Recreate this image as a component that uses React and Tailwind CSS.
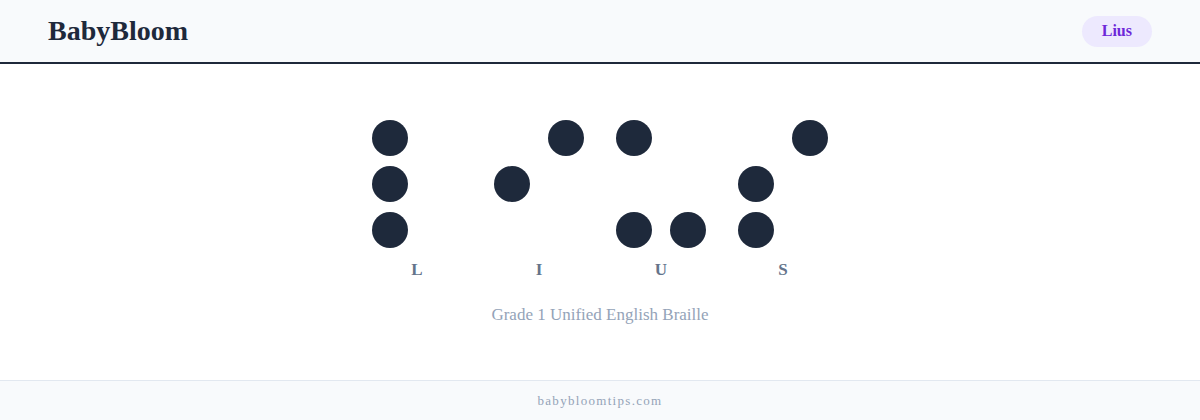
import React from "react";

const cells = [
  { letter: "L", dots: [1, 2, 3] },
  { letter: "I", dots: [2, 4] },
  { letter: "U", dots: [1, 3, 6] },
  { letter: "S", dots: [2, 3, 4] },
];

function Cell({ letter, dots }) {
  const order = [1, 4, 2, 5, 3, 6];
  return (
    <div className="flex flex-col items-center">
      <div className="grid grid-cols-2 gap-x-[18px] gap-y-[10px]">
        {order.map((d) => (
          <div
            key={d}
            className={
              dots.includes(d)
                ? "w-9 h-9 rounded-full bg-[#1e293b]"
                : "w-9 h-9 rounded-full"
            }
          />
        ))}
      </div>
      <div className="mt-[10px] text-[17px] leading-6 font-semibold text-[#64748b]">{letter}</div>
    </div>
  );
}

export default function App() {
  return (
    <div className="w-[1200px] h-[420px] flex flex-col bg-white" style={{ fontFamily: '"Liberation Serif", "DejaVu Serif", serif' }}>
      <header className="h-[64px] shrink-0 bg-[#f8fafc] border-b-2 border-[#1e293b] flex items-center justify-between pl-12 pr-12">
        <div className="text-[28px] font-bold text-[#1e293b]">BabyBloom</div>
        <div className="h-[31px] px-5 rounded-full bg-[#ede9fe] text-[#6d28d9] text-[16px] font-semibold flex items-center">Lius</div>
      </header>
      <main className="flex-1 flex flex-col items-center justify-center pt-[3px]">
        <div className="flex gap-8">
          {cells.map((c) => (
            <Cell key={c.letter} {...c} />
          ))}
        </div>
        <div className="mt-[21px] text-[17px] leading-6 text-[#94a3b8]">Grade 1 Unified English Braille</div>
      </main>
      <footer className="h-[40px] shrink-0 bg-[#f8fafc] border-t border-[#e2e8f0] flex items-center justify-center">
        <div className="text-[13px] tracking-[0.1em] text-[#94a3b8]">babybloomtips.com</div>
      </footer>
    </div>
  );
}
